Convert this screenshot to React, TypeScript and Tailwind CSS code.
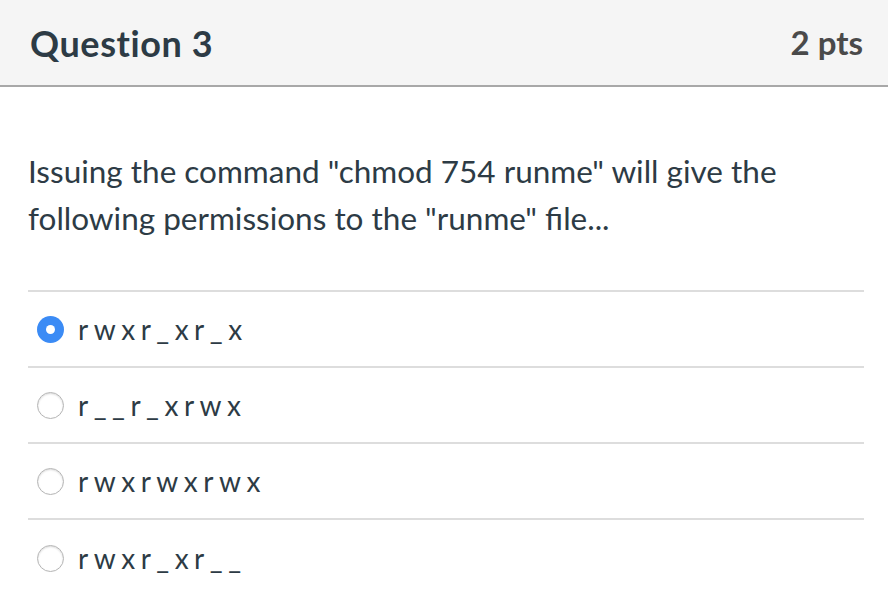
import React from "react";

const answers = ["rwxr_xr_x", "r__r_xrwx", "rwxrwxrwx", "rwxr_xr__"];

function Radio({ checked }: { checked: boolean }) {
  if (checked) {
    return (
      <span className="flex h-[27px] w-[27px] shrink-0 items-center justify-center rounded-full bg-[#3b8bf5]">
        <span className="h-[9px] w-[9px] rounded-full bg-white" />
      </span>
    );
  }
  return (
    <span className="h-[27px] w-[27px] shrink-0 rounded-full border border-[#b5b5b5] bg-white shadow-[inset_0_1px_2px_rgba(0,0,0,0.15)]" />
  );
}

export default function App() {
  return (
    <div className="h-[602px] w-[888px] bg-white text-[#2d3b45]" style={{ fontFamily: "Lato, 'Open Sans', sans-serif" }}>
      <div className="flex h-[87px] items-center justify-between border-b-2 border-[#a8a8a8] bg-[#f5f5f5] pl-[30px] pr-[25px]">
        <h2 className="text-[36px] font-bold tracking-[0.6px]">Question 3</h2>
        <span className="text-[33px] font-bold text-[#4a4a4a]">2 pts</span>
      </div>
      <div className="pl-[28px] pr-[24px] pt-[61px]">
        <p className="text-[31.5px] leading-[47px]">
          Issuing the command "chmod 754 runme" will give the following permissions to the "runme" file...
        </p>
        <div className="mt-[48px] border-t-2 border-[#dddddd]">
          {answers.map((a, i) => (
            <div
              key={a}
              className={`flex h-[76px] items-center gap-[14px] pl-[9px] ${i < answers.length - 1 ? "border-b-2 border-[#dddddd]" : ""}`}
            >
              <Radio checked={i === 0} />
              <span className="text-[28px] tracking-[5.5px]">{a}</span>
            </div>
          ))}
        </div>
      </div>
    </div>
  );
}
